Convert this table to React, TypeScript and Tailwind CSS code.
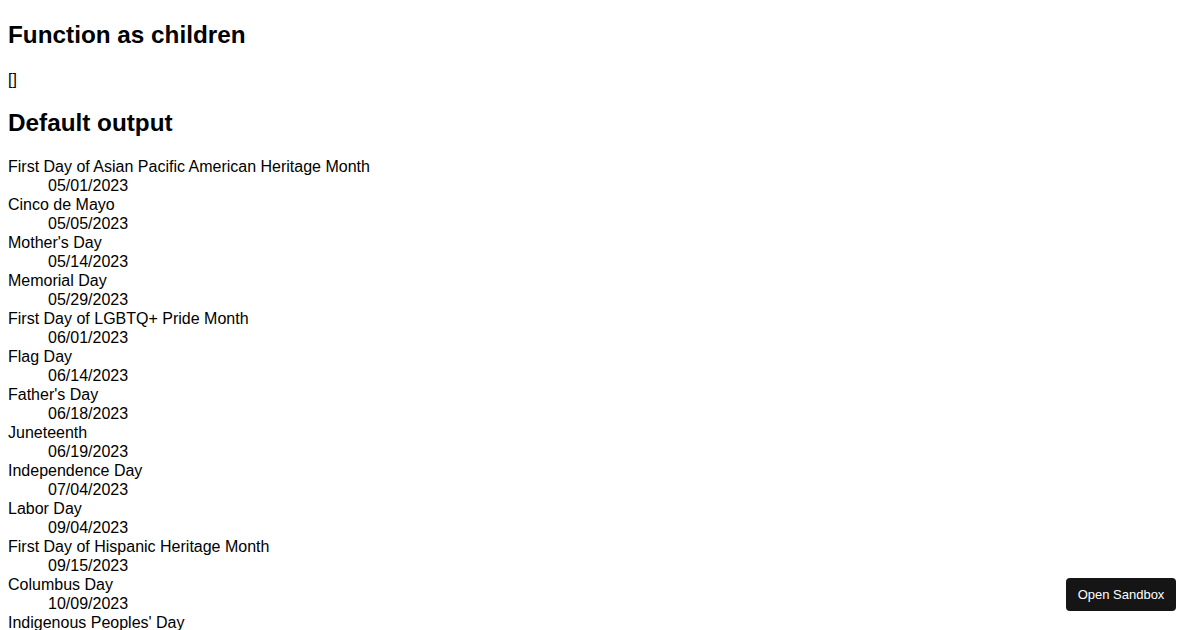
const holidays = [
  { name: 'First Day of Asian Pacific American Heritage Month', date: '05/01/2023' },
  { name: 'Cinco de Mayo', date: '05/05/2023' },
  { name: "Mother's Day", date: '05/14/2023' },
  { name: 'Memorial Day', date: '05/29/2023' },
  { name: 'First Day of LGBTQ+ Pride Month', date: '06/01/2023' },
  { name: 'Flag Day', date: '06/14/2023' },
  { name: "Father's Day", date: '06/18/2023' },
  { name: 'Juneteenth', date: '06/19/2023' },
  { name: 'Independence Day', date: '07/04/2023' },
  { name: 'Labor Day', date: '09/04/2023' },
  { name: 'First Day of Hispanic Heritage Month', date: '09/15/2023' },
  { name: 'Columbus Day', date: '10/09/2023' },
  { name: "Indigenous Peoples' Day", date: '10/09/2023' },
  { name: 'Halloween', date: '10/31/2023' },
  { name: 'Veterans Day', date: '11/11/2023' },
  { name: 'Thanksgiving Day', date: '11/23/2023' },
];

export default function App() {
  return (
    <div className="min-h-[630px] bg-white text-black font-['Liberation_Sans',Arial,sans-serif] text-base leading-[19px] px-2 pt-[21px]">
      {/* Function as children */}
      <h2 className="text-[24.3px] font-bold leading-[28px]">Function as children</h2>
      <p className="mt-[21px]">[]</p>

      {/* Default output */}
      <h2 className="mt-[20px] text-[24.3px] font-bold leading-[28px]">Default output</h2>
      <dl className="mt-[20px]">
        {holidays.map((h) => (
          <div key={h.name}>
            <dt>{h.name}</dt>
            <dd className="ml-10">{h.date}</dd>
          </div>
        ))}
      </dl>

      <button className="fixed right-[24px] bottom-[19px] h-[33px] w-[110px] rounded-[4px] bg-[#151515] text-white text-[13px]">
        Open Sandbox
      </button>
    </div>
  );
}
